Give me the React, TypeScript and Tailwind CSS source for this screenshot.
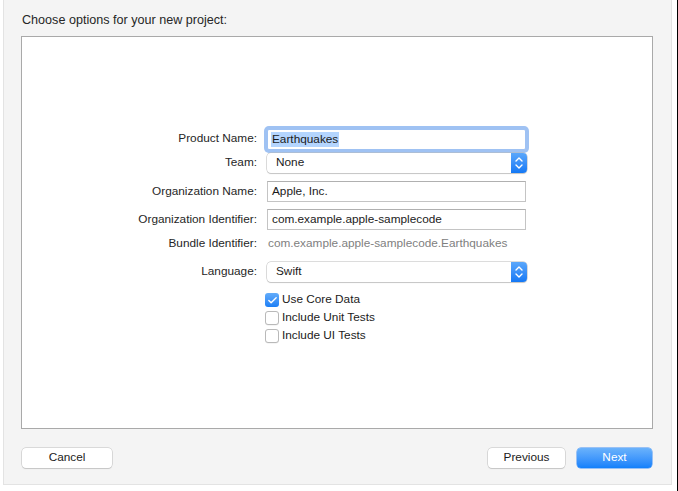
import { Check } from 'lucide-react';

const font = { fontFamily: '"Liberation Sans", Arial, sans-serif' };

function Label({ children }: { children: string }) {
  return <div className="w-[236px] shrink-0 pr-[1px] text-right text-[11.8px] text-[#262626]">{children}</div>;
}

function TextField({ value, focused }: { value: string; focused?: boolean }) {
  if (focused) {
    return (
      <div className="ml-[9px] h-[21px] w-[259px] rounded-[2px] border border-[#9fc2f3] bg-white shadow-[0_0_0_3px_#9fc2f3] flex items-center px-[3px]">
        <span className="bg-[#b4d5fe] px-[1px] text-[11.8px] leading-[15px] text-[#1b1b1b]">{value}</span>
      </div>
    );
  }
  return (
    <div className="ml-[9px] h-[21px] w-[259px] border border-[#c4c4c4] border-t-[#b0b0b0] bg-white flex items-center px-[4px] text-[11.8px] text-[#1b1b1b]">
      {value}
    </div>
  );
}

function Popup({ value }: { value: string }) {
  return (
    <div className="ml-[9px] flex h-[20px] w-[260px] items-stretch rounded-[4px] bg-white shadow-[0_0_0_0.5px_#b9b9b9,0_1px_1px_rgba(0,0,0,0.18)]">
      <div className="flex flex-1 items-center pl-[9px] text-[11.8px] text-[#1b1b1b]">{value}</div>
      <div className="flex w-[16px] flex-col items-center justify-center gap-[2px] rounded-r-[4px] bg-gradient-to-b from-[#5aa7fb] to-[#1278f5]">
        <svg width="8" height="5" viewBox="0 0 8 5" fill="none">
          <path d="M1 4 L4 1 L7 4" stroke="white" strokeWidth="1.4" strokeLinecap="round" strokeLinejoin="round" />
        </svg>
        <svg width="8" height="5" viewBox="0 0 8 5" fill="none">
          <path d="M1 1 L4 4 L7 1" stroke="white" strokeWidth="1.4" strokeLinecap="round" strokeLinejoin="round" />
        </svg>
      </div>
    </div>
  );
}

function CheckRow({ label, checked, className }: { label: string; checked?: boolean; className: string }) {
  return (
    <div className={`flex h-[18px] items-center pl-[243px] ${className}`}>
      {checked ? (
        <div className="flex h-[14px] w-[14px] items-center justify-center rounded-[3px] bg-gradient-to-b from-[#62acfa] to-[#1a7ff6]">
          <Check size={11} strokeWidth={3} color="white" />
        </div>
      ) : (
        <div className="h-[14px] w-[14px] rounded-[3px] border border-[#b9b9b9] bg-white shadow-[0_0.5px_0.5px_rgba(0,0,0,0.08)]" />
      )}
      <span className="ml-[3px] text-[11.8px] text-[#1b1b1b]">{label}</span>
    </div>
  );
}

function Button({ children, primary, className }: { children: string; primary?: boolean; className?: string }) {
  return (
    <div
      className={`flex h-[20px] items-center justify-center rounded-[4px] text-[11.8px] ${
        primary
          ? 'bg-gradient-to-b from-[#6ab2fb] to-[#1080fb] text-white shadow-[0_0_0_0.5px_#3d8ef5]'
          : 'bg-white text-[#1b1b1b] shadow-[0_0_0_0.5px_#bdbdbd,0_1px_1px_rgba(0,0,0,0.15)]'
      } ${className ?? ''}`}>
      {children}
    </div>
  );
}

export default function App() {
  return (
    <div className="h-[491px] w-[678px] overflow-hidden bg-white" style={font}>
      <div className="flex h-full">
        <div className="ml-[3px] flex h-[485px] w-[669px] flex-col border-x border-b border-[#e3e3e3] bg-[#f4f4f4] pl-[17px] pt-[12px]">
          <div className="h-[16px] pl-[1px] text-[12.6px] leading-[16px] text-[#262626]">Choose options for your new project:</div>

          <div className="mt-[8px] h-[393px] w-[632px] border border-[#a9a9a9] bg-white pt-[91px]">
            <div className="flex h-[22px] items-center">
              <Label>Product Name:</Label>
              <TextField value="Earthquakes" focused />
            </div>
            <div className="mt-[3px] flex h-[20px] items-center">
              <Label>Team:</Label>
              <Popup value="None" />
            </div>
            <div className="mt-[8px] flex h-[21px] items-center">
              <Label>Organization Name:</Label>
              <TextField value="Apple, Inc." />
            </div>
            <div className="mt-[7px] flex h-[21px] items-center">
              <Label>Organization Identifier:</Label>
              <TextField value="com.example.apple-samplecode" />
            </div>
            <div className="mt-[5px] flex h-[18px] items-center">
              <Label>Bundle Identifier:</Label>
              <div className="ml-[10px] text-[11.8px] text-[#808080]">com.example.apple-samplecode.Earthquakes</div>
            </div>
            <div className="mt-[9px] flex h-[20px] items-center">
              <Label>Language:</Label>
              <Popup value="Swift" />
            </div>
            <CheckRow className="mt-[9px]" label="Use Core Data" checked />
            <CheckRow className="" label="Include Unit Tests" />
            <CheckRow className="" label="Include UI Tests" />
          </div>

          <div className="mt-[19px] flex w-[631px] items-center pl-[1px]">
            <Button className="w-[90px]">Cancel</Button>
            <div className="flex-1" />
            <Button className="w-[77px]">Previous</Button>
            <Button primary className="ml-[12px] w-[75px]">Next</Button>
          </div>
        </div>
        <div className="flex-1" />
        <div className="w-px bg-black" />
      </div>
    </div>
  );
}
